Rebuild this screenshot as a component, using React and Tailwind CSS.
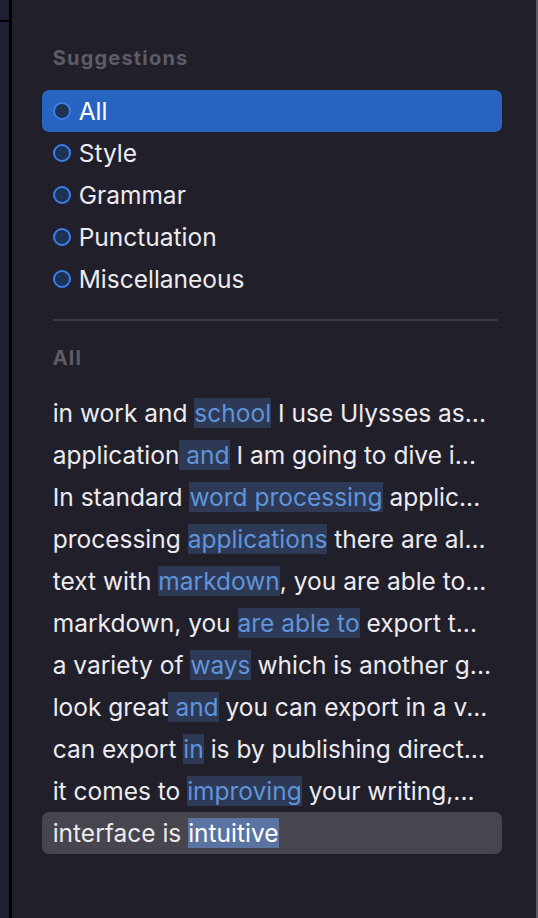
import React from "react";

const filters = ["All", "Style", "Grammar", "Punctuation", "Miscellaneous"];

// each line: array of [text, highlighted]
const lines = [
  [["in work and ", false], ["school", true], [" I use Ulysses as...", false]],
  [["application", false], [" and", true], [" I am going to dive i...", false]],
  [["In standard ", false], ["word processing", true], [" applic...", false]],
  [["processing ", false], ["applications", true], [" there are al...", false]],
  [["text with ", false], ["markdown", true], [", you are able to...", false]],
  [["markdown, you ", false], ["are able to", true], [" export t...", false]],
  [["a variety of ", false], ["ways", true], [" which is another g...", false]],
  [["look great", false], [" and", true], [" you can export in a v...", false]],
  [["can export ", false], ["in", true], [" is by publishing direct...", false]],
  [["it comes to ", false], ["improving", true], [" your writing,...", false]],
  [["interface is ", false], ["intuitive", true]],
];

function Radio() {
  return (
    <span className="w-[18px] h-[18px] rounded-full border-2 border-[#3b7ef0] bg-[#1d3353] flex-shrink-0" />
  );
}

export default function App() {
  return (
    <div
      className="w-[538px] h-[918px] flex bg-[#21202a] overflow-hidden"
      style={{ fontFamily: "Inter, 'Noto Sans', sans-serif" }}
    >
      {/* left strip */}
      <div className="w-[9px] h-full bg-[#1f1f33] flex flex-col">
        <div className="h-[20px]" />
        <div className="h-[2px] bg-black" />
      </div>
      <div className="w-[3px] h-full bg-black" />

      {/* panel */}
      <div className="flex-1 h-full flex flex-col pl-[30px] pr-[34px] pt-[46px]">
        <div className="px-[11px] text-[20px] font-bold tracking-[1.2px] text-[#5d5c67] leading-[24px]">
          Suggestions
        </div>

        <div className="mt-[20px] flex flex-col">
          {filters.map((f, i) => (
            <div
              key={f}
              className={
                "h-[42px] flex items-center gap-[8px] px-[11px] rounded-[7px] text-[24.5px] text-[#ecebf0] " +
                (i === 0 ? "bg-[#2764c2] text-white" : "")
              }
            >
              <Radio />
              <span>{f}</span>
            </div>
          ))}
        </div>

        <div className="mt-[19px] h-[2px] bg-[#3b3a45] ml-[11px] mr-[4px]" />

        <div className="px-[11px] mt-[25px] text-[20px] font-bold tracking-[1.2px] text-[#5d5c67] leading-[24px]">
          All
        </div>

        <div className="mt-[22px] flex flex-col">
          {lines.map((parts, i) => {
            const last = i === lines.length - 1;
            return (
              <div
                key={i}
                className={
                  "h-[42px] flex items-center px-[11px] rounded-[7px] text-[24.5px] text-[#ecebf0] whitespace-pre " +
                  (last ? "bg-[#47454e]" : "")
                }
              >
                {parts.map(([t, hl], j) =>
                  hl ? (
                    <span
                      key={j}
                      className={
                        "leading-[30px] " +
                        (last ? "bg-[#5b73a0] text-white" : "bg-[#2e3a55] text-[#5f94dc]")
                      }
                    >
                      {t}
                    </span>
                  ) : (
                    <span key={j} className="leading-[30px]">
                      {t}
                    </span>
                  )
                )}
              </div>
            );
          })}
        </div>
      </div>

      {/* right edge */}
      <div className="w-[2px] h-full bg-[#5b5a62]" />
    </div>
  );
}
